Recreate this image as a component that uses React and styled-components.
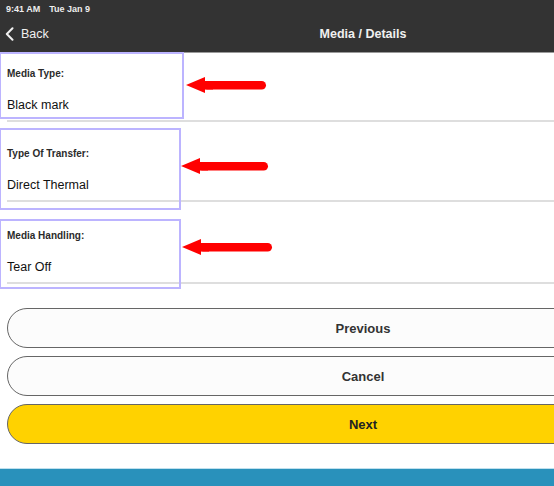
import React from "react";
import styled, { createGlobalStyle } from "styled-components";

const Global = createGlobalStyle`
  html, body { margin: 0; padding: 0; background: #fff; overflow: hidden; }
  body { font-family: "Liberation Sans", Arial, sans-serif; }
`;

const Viewport = styled.div`
  width: 100vw;
  height: 486px;
  overflow: hidden;
`;

const Screen = styled.div`
  position: relative;
  width: 726px;
  height: 486px;
  background: #fff;
  display: flex;
  flex-direction: column;
`;

const Header = styled.header`
  background: #333333;
  height: 52px;
  border-bottom: 1px solid #9a9a9a;
  display: flex;
  flex-direction: column;
  color: #f2f2f2;
`;

const StatusBar = styled.div`
  height: 17px;
  display: flex;
  align-items: center;
  gap: 9px;
  padding-left: 6px;
  font-size: 9px;
  font-weight: 600;
  color: #eee;
`;

const NavBar = styled.div`
  position: relative;
  flex: 1;
  display: flex;
  align-items: center;
  padding-bottom: 1px;
`;

const BackButton = styled.div`
  display: flex;
  align-items: center;
  gap: 7px;
  padding-left: 5px;
  font-size: 12.5px;
  color: #f0f0f0;
`;

const Title = styled.div`
  position: absolute;
  left: 0;
  right: 0;
  text-align: center;
  font-size: 12.5px;
  font-weight: 700;
  color: #f0f0f0;
  pointer-events: none;
`;

const Row = styled.div`
  margin-left: 7px;
  padding-top: ${(p) => p.$top}px;
  height: ${(p) => p.$height}px;
  box-sizing: border-box;
  border-bottom: 2px solid #dedede;
  display: flex;
  flex-direction: column;
`;

const Label = styled.div`
  font-size: 10px;
  font-weight: 700;
  color: #2b2b2b;
  height: 14px;
  line-height: 14px;
`;

const Value = styled.div`
  margin-top: 16px;
  font-size: 12.5px;
  color: #111;
  height: 16px;
  line-height: 16px;
`;

const Buttons = styled.div`
  display: flex;
  flex-direction: column;
  gap: 8px;
  margin: 24px 7px 0 7px;
`;

const Button = styled.div`
  height: 40px;
  box-sizing: border-box;
  border: 1.5px solid #666;
  border-radius: 20px;
  background: ${(p) => (p.$primary ? "#ffd200" : "#fcfcfc")};
  display: flex;
  align-items: center;
  justify-content: center;
  font-size: 13px;
  font-weight: 700;
  color: ${(p) => (p.$primary ? "#222" : "#333")};
`;

const Footer = styled.div`
  margin-top: auto;
  height: 17px;
  background: #2991bb;
  border-top: 1px solid #bfe0ee;
`;

const Highlight = styled.div`
  position: absolute;
  left: -1px;
  top: ${(p) => p.$top}px;
  width: ${(p) => p.$width}px;
  height: ${(p) => p.$height}px;
  box-sizing: border-box;
  border: 2px solid #bcb4ff;
  pointer-events: none;
`;

const ArrowWrap = styled.svg`
  position: absolute;
  left: ${(p) => p.$left}px;
  top: ${(p) => p.$top}px;
  overflow: visible;
`;

function Arrow({ left, top, length }) {
  return (
    <ArrowWrap $left={left} $top={top} width={length} height={16} viewBox={`0 0 ${length} 16`}>
      <polygon points="0,8 19,0 19,16" fill="#ff0000" />
      <rect x="17" y="4" width={length - 17} height="8.5" rx="4.25" fill="#ff0000" />
      <rect x="17" y="4" width="10" height="8.5" fill="#ff0000" />
    </ArrowWrap>
  );
}

function Chevron() {
  return (
    <svg width="9" height="14" viewBox="0 0 9 14">
      <path d="M7.5 1.2 L1.8 7 L7.5 12.8" fill="none" stroke="#f0f0f0" strokeWidth="2" strokeLinecap="round" strokeLinejoin="round" />
    </svg>
  );
}

const fields = [
  { label: "Media Type:", value: "Black mark", top: 14, height: 69 },
  { label: "Type Of Transfer:", value: "Direct Thermal", top: 25, height: 80 },
  { label: "Media Handling:", value: "Tear Off", top: 27, height: 82 },
];

export default function App() {
  return (
    <>
      <Global />
      <Viewport>
        <Screen>
          <Header>
            <StatusBar>
              <span>9:41 AM</span>
              <span>Tue Jan 9</span>
            </StatusBar>
            <NavBar>
              <BackButton>
                <Chevron />
                <span>Back</span>
              </BackButton>
              <Title>Media / Details</Title>
            </NavBar>
          </Header>
          {fields.map((f) => (
            <Row key={f.label} $top={f.top} $height={f.height}>
              <Label>{f.label}</Label>
              <Value>{f.value}</Value>
            </Row>
          ))}
          <Buttons>
            <Button>Previous</Button>
            <Button>Cancel</Button>
            <Button $primary>Next</Button>
          </Buttons>
          <Footer />

          <Highlight $top={52} $width={185} $height={67} />
          <Highlight $top={128} $width={182} $height={82} />
          <Highlight $top={219} $width={182} $height={70} />
          <Arrow left={186} top={77} length={80} />
          <Arrow left={181} top={158} length={87} />
          <Arrow left={182} top={239} length={90} />
        </Screen>
      </Viewport>
    </>
  );
}
